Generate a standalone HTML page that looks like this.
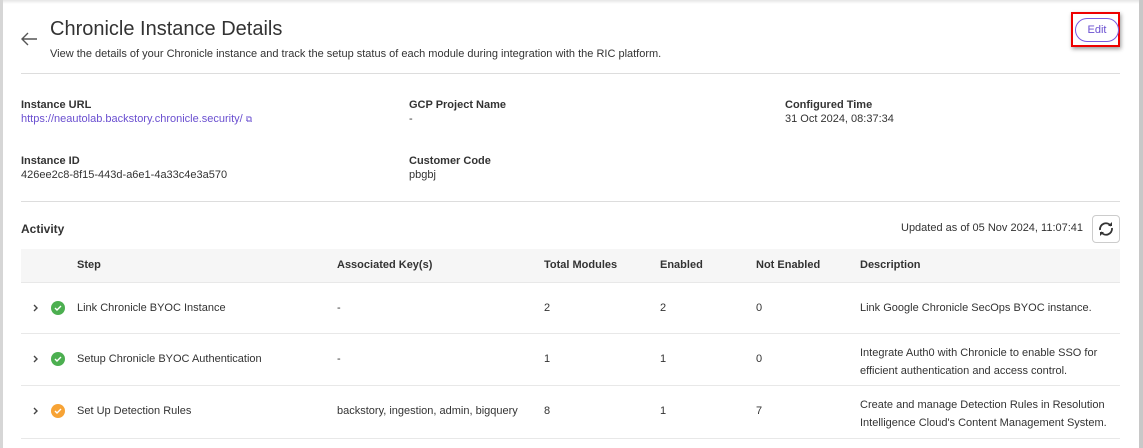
<!DOCTYPE html><html><head><style>
*{margin:0;padding:0;box-sizing:border-box}
body{width:1143px;height:448px;overflow:hidden;background:#fff;font-family:"Liberation Sans",sans-serif;color:#333;position:relative;font-size:11px}
.a{position:absolute;white-space:nowrap}
.lbl{font-weight:bold;color:#333;font-size:11px}
.val{font-size:11px;color:#333}
.hr{position:absolute;left:21px;width:1099px;height:1px;background:#ddd}
.th{font-weight:bold;font-size:11px}
</style></head><body>
<div class="a" style="left:0;top:0;width:1143px;height:4px;background:linear-gradient(#e6e6e6,#fff)"></div>
<div class="a" style="left:0;top:0;width:3px;height:448px;background:#d6d6d6"></div>
<div class="a" style="left:1139px;top:0;width:4px;height:448px;background:#c8c8c8"></div>
<svg class="a" style="left:20px;top:31px" width="18" height="16" viewBox="0 0 18 16"><path d="M17 8H2M8 2L2 8l6 6" fill="none" stroke="#555" stroke-width="1.4"/></svg>
<div class="a" style="left:50px;top:18px;font-size:20px;color:#333">Chronicle Instance Details</div>
<div class="a" style="left:50px;top:48px;font-size:11px;color:#333">View the details of your Chronicle instance and track the setup status of each module during integration with the RIC platform.</div>
<div class="a" style="left:1071px;top:12px;width:49px;height:35px;border:2px solid #e00;box-shadow:1px 2px 4px rgba(0,0,0,.4)"></div>
<div class="a" style="left:1075px;top:18px;width:44px;height:24px;border:1px solid #7a5ce0;border-radius:12px;color:#6a4fd0;font-size:11px;text-align:center;line-height:22px">Edit</div>
<div class="hr" style="top:73px"></div>
<div class="a lbl" style="left:21px;top:99px">Instance URL</div>
<div class="a val" style="left:21px;top:113px;color:#6a4fd0">https://neautolab.backstory.chronicle.security/ <span style="font-size:9px">&#x29C9;</span></div>
<div class="a lbl" style="left:409px;top:99px">GCP Project Name</div>
<div class="a val" style="left:409px;top:113px">-</div>
<div class="a lbl" style="left:785px;top:99px">Configured Time</div>
<div class="a val" style="left:785px;top:113px">31 Oct 2024, 08:37:34</div>
<div class="a lbl" style="left:21px;top:155px">Instance ID</div>
<div class="a val" style="left:21px;top:169px">426ee2c8-8f15-443d-a6e1-4a33c4e3a570</div>
<div class="a lbl" style="left:409px;top:155px">Customer Code</div>
<div class="a val" style="left:409px;top:169px">pbgbj</div>
<div class="hr" style="top:201px"></div>
<div class="a" style="left:21px;top:222px;font-size:12px;font-weight:bold">Activity</div>
<div class="a" style="left:901px;top:222px;font-size:11px">Updated as of 05 Nov 2024, 11:07:41</div>
<div class="a" style="left:1092px;top:215px;width:28px;height:28px;border:1px solid #ccc;border-radius:4px"></div>
<svg class="a" style="left:1097px;top:221px" width="18" height="16" viewBox="0 0 18 16"><path d="M3 9a6 6 0 0 1 11-4M15 7a6 6 0 0 1-11 4" fill="none" stroke="#333" stroke-width="1.8"/><path d="M11 5h4V1zM7 11H3v4z" fill="#333"/></svg>
<div class="a" style="left:21px;top:249px;width:1099px;height:34px;background:#f6f6f6;border-bottom:1px solid #e8e8e8"></div>
<div class="a th" style="left:77px;top:259px">Step</div>
<div class="a th" style="left:337px;top:259px">Associated Key(s)</div>
<div class="a th" style="left:544px;top:259px">Total Modules</div>
<div class="a th" style="left:660px;top:259px">Enabled</div>
<div class="a th" style="left:756px;top:259px">Not Enabled</div>
<div class="a th" style="left:860px;top:259px">Description</div>

<svg class="a" style="left:33px;top:304px" width="6" height="8"><path d="M1 1l3 3-3 3" fill="none" stroke="#444" stroke-width="1.4"/></svg>
<svg class="a" style="left:51px;top:301px" width="14" height="14"><circle cx="7" cy="7" r="7" fill="#4caf50"/><path d="M4 7l2 2 4-4" fill="none" stroke="#fff" stroke-width="1.4"/></svg>
<div class="a val" style="left:77px;top:302px">Link Chronicle BYOC Instance</div>
<div class="a val" style="left:337px;top:302px">-</div>
<div class="a val" style="left:544px;top:302px">2</div>
<div class="a val" style="left:660px;top:302px">2</div>
<div class="a val" style="left:756px;top:302px">0</div>
<div class="a val" style="left:860px;top:302px">Link Google Chronicle SecOps BYOC instance.</div>
<div class="hr" style="top:333px;background:#e8e8e8"></div>

<svg class="a" style="left:33px;top:355px" width="6" height="8"><path d="M1 1l3 3-3 3" fill="none" stroke="#444" stroke-width="1.4"/></svg>
<svg class="a" style="left:51px;top:352px" width="14" height="14"><circle cx="7" cy="7" r="7" fill="#4caf50"/><path d="M4 7l2 2 4-4" fill="none" stroke="#fff" stroke-width="1.4"/></svg>
<div class="a val" style="left:77px;top:353px">Setup Chronicle BYOC Authentication</div>
<div class="a val" style="left:337px;top:353px">-</div>
<div class="a val" style="left:544px;top:353px">1</div>
<div class="a val" style="left:660px;top:353px">1</div>
<div class="a val" style="left:756px;top:353px">0</div>
<div class="a val" style="left:860px;top:344px;line-height:18px">Integrate Auth0 with Chronicle to enable SSO for<br>efficient authentication and access control.</div>
<div class="hr" style="top:385px;background:#e8e8e8"></div>

<svg class="a" style="left:33px;top:407px" width="6" height="8"><path d="M1 1l3 3-3 3" fill="none" stroke="#444" stroke-width="1.4"/></svg>
<svg class="a" style="left:51px;top:404px" width="14" height="14"><circle cx="7" cy="7" r="7" fill="#f7a335"/><path d="M4 7l2 2 4-4" fill="none" stroke="#fff" stroke-width="1.4"/></svg>
<div class="a val" style="left:77px;top:405px">Set Up Detection Rules</div>
<div class="a val" style="left:337px;top:405px">backstory, ingestion, admin, bigquery</div>
<div class="a val" style="left:544px;top:405px">8</div>
<div class="a val" style="left:660px;top:405px">1</div>
<div class="a val" style="left:756px;top:405px">7</div>
<div class="a val" style="left:860px;top:396px;line-height:18px">Create and manage Detection Rules in Resolution<br>Intelligence Cloud's Content Management System.</div>
<div class="hr" style="top:438px;background:#e8e8e8"></div>
</body></html>
